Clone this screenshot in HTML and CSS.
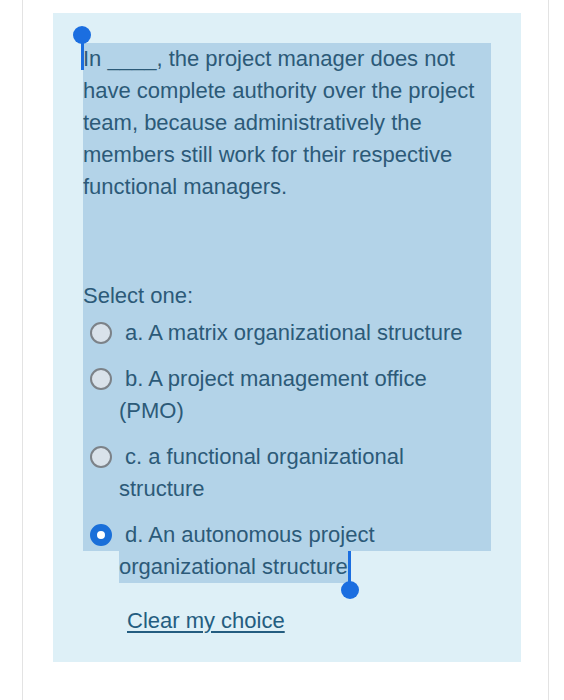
FILE: index.html
```html
<!DOCTYPE html>
<html lang="en">
<head>
<meta charset="utf-8">
<title>Question</title>
<link rel="stylesheet" href="styles.css">
</head>
<body>
<div class="page">
  <div class="panel">
    <div class="sel">
      <span class="handle handle-start"><span class="knob"></span><span class="stem"></span></span>
      <div class="qtext">In ____, the project manager does not have complete authority over the project team, because administratively the members still work for their respective functional managers.</div>
      <div class="prompt">Select one:</div>
      <div class="answers">
        <div class="answer">
          <span class="radio"></span>
          <span class="label">a. A matrix organizational structure</span>
        </div>
        <div class="answer">
          <span class="radio"></span>
          <span class="label">b. A project management office (PMO)</span>
        </div>
        <div class="answer">
          <span class="radio"></span>
          <span class="label">c. a functional organizational structure</span>
        </div>
        <div class="answer last">
          <span class="radio checked"></span>
          <span class="label">d. An autonomous project<br><span class="hl">organizational structure<span class="handle handle-end"><span class="stem"></span><span class="knob"></span></span></span></span>
        </div>
      </div>
    </div>
    <div class="clear"><a href="#" class="clear-link">Clear my choice</a></div>
  </div>
</div>
</body>
</html>
```

FILE: styles.css
```css
html, body {
  margin: 0;
  padding: 0;
  background: #ffffff;
}

body {
  font-family: "Liberation Sans", Arial, sans-serif;
  font-size: 22px;
  line-height: 32px;
  color: #2c5a78;
}

.page {
  margin-left: 22px;
  width: 527px;
  min-height: 700px;
  border-left: 1px solid #e3e3e3;
  border-right: 1px solid #e3e3e3;
  padding-top: 13px;
  box-sizing: border-box;
}

.panel {
  margin-left: 30px;
  width: 468px;
  box-sizing: border-box;
  background: #def0f7;
  padding: 30px 30px 25px 30px;
}

.sel {
  position: relative;
  background: linear-gradient(#b3d3e8, #b3d3e8) no-repeat;
  background-size: 100% calc(100% - 32px);
}

.qtext {
  margin: 0;
}

.prompt {
  margin-top: 77px;
}

.answers {
  display: flex;
  flex-direction: column;
}

.answer {
  display: flex;
  align-items: flex-start;
  margin-top: 14px;
}

.answer:first-child {
  margin-top: 5px;
}

.radio {
  flex: none;
  width: 22px;
  height: 22px;
  box-sizing: border-box;
  border-radius: 50%;
  border: 2px solid #7c8288;
  background: #d9e2ea;
  margin: 5px 7px 0 7px;
}

.radio.checked {
  border: 7px solid #1a6fd9;
  background: #ffffff;
}

.label {
  flex: 1;
  text-indent: 6px;
}

.hl {
  position: relative;
  display: inline-block;
  text-indent: 0;
  background: #b3d3e8;
  padding-right: 1px;
}

.handle {
  position: absolute;
  display: block;
}

.handle .knob {
  display: block;
  width: 18px;
  height: 18px;
  border-radius: 50%;
  background: #1b6ee0;
}

.handle .stem {
  display: block;
  width: 3px;
  background: #1b6ee0;
}

.handle-start {
  left: -10px;
  top: -17px;
}

.handle-start .stem {
  height: 35px;
  margin-left: 8px;
  margin-top: -9px;
}

.handle-end {
  right: -10px;
  top: 0;
}

.handle-end .stem {
  height: 39px;
  margin-left: 7px;
}

.handle-end .knob {
  margin-top: -9px;
}

.clear {
  margin-top: 22px;
  padding-left: 44px;
}

.clear-link {
  color: #245d80;
  text-decoration: underline;
  text-underline-offset: 3px;
}
```
